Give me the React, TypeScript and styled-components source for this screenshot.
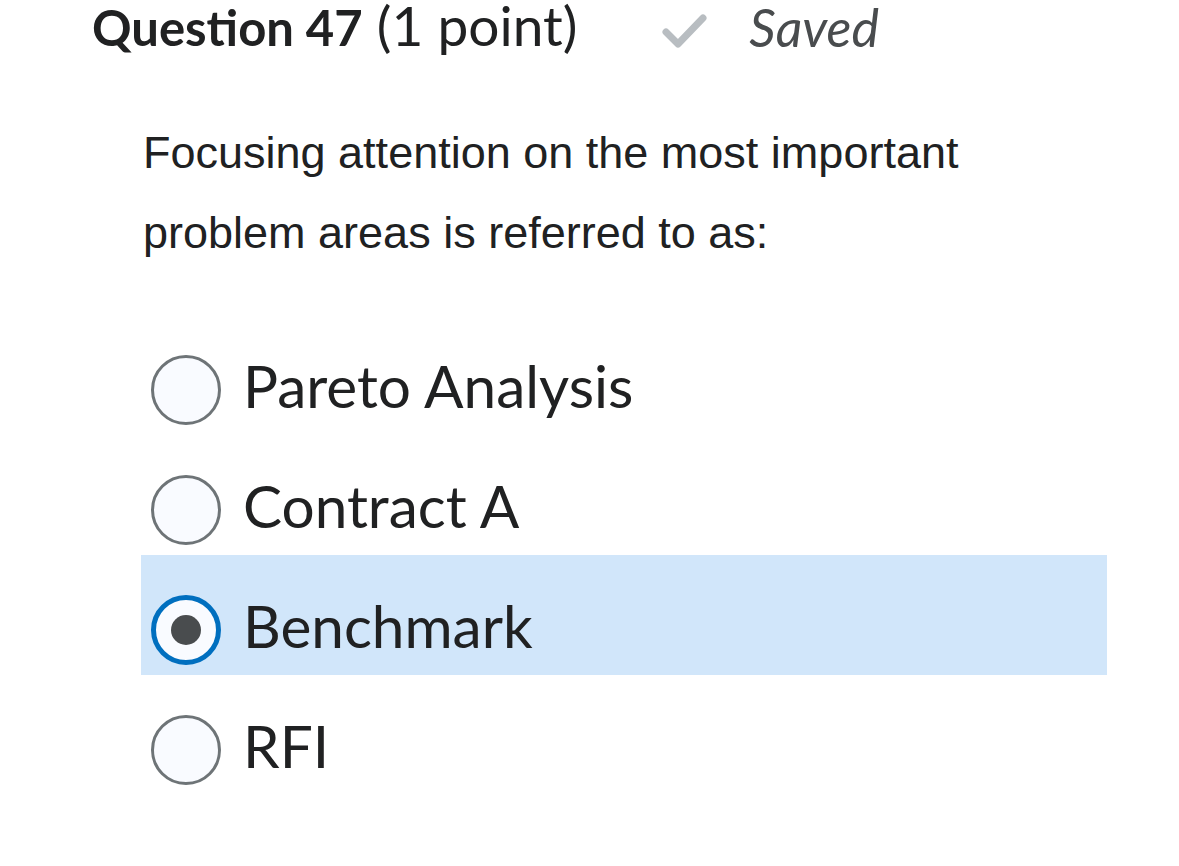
import React from "react";
import styled, { createGlobalStyle } from "styled-components";

const GlobalStyle = createGlobalStyle`
  html, body {
    margin: 0;
    padding: 0;
    background: #ffffff;
  }
`;

const Page = styled.div`
  width: 1179px;
  height: 866px;
  overflow: hidden;
  background: #fff;
  color: #202122;
  font-family: Lato, "Noto Sans", sans-serif;
`;

const Header = styled.div`
  display: flex;
  align-items: flex-start;
  padding: 0 0 0 92px;
  height: 58px;
`;

const Title = styled.h2`
  margin: 0;
  font-size: 55px;
  font-weight: 400;
  color: #202122;
  line-height: 46px;
  padding-top: 2px;
`;

const Strong = styled.span`
  font-size: 49px;
  font-weight: 700;
`;

const Status = styled.div`
  display: flex;
  align-items: flex-start;
  margin-left: 84px;
  gap: 42px;
  color: #494c4e;
  font-style: italic;
  font-size: 52px;
  line-height: 54px;
`;

const Check = styled.svg`
  margin-top: 14px;
  flex-shrink: 0;
`;

const Prompt = styled.p`
  margin: 55px 0 0 143px;
  width: 900px;
  font-family: "Liberation Sans", Arial, sans-serif;
  font-size: 45px;
  line-height: 80px;
  color: #202122;
`;

const Options = styled.div`
  margin-top: 42px;
  padding-left: 141px;
  width: 966px;
`;

const Option = styled.label<{ selected?: boolean }>`
  box-sizing: border-box;
  display: flex;
  align-items: center;
  height: 120px;
  padding: 30px 0 0 10px;
  background: ${(p) => (p.selected ? "#d1e6fa" : "transparent")};
`;

const Radio = styled.span<{ selected?: boolean }>`
  box-sizing: border-box;
  width: 70px;
  height: 70px;
  border-radius: 50%;
  background: #f9fbff;
  border: ${(p) => (p.selected ? "5px solid #006fbf" : "3px solid #6e7477")};
  display: flex;
  align-items: center;
  justify-content: center;
  flex-shrink: 0;
`;

const Dot = styled.span`
  width: 30px;
  height: 30px;
  border-radius: 50%;
  background: #494c4e;
`;

const OptionText = styled.span`
  margin: 0 0 10px 22px;
  font-size: 58.5px;
  color: #202122;
`;

const options = ["Pareto Analysis", "Contract A", "Benchmark", "RFI"];

const App: React.FC = () => {
  const selected = 2;
  return (
    <>
      <GlobalStyle />
      <Page>
        <Header>
          <Title>
            <Strong>Question 47</Strong> (1 point)
          </Title>
          <Status>
            <Check width="46" height="34" viewBox="0 0 46 34">
              <path
                d="M5 18 L17 30 L42 4"
                fill="none"
                stroke="#b8bdc1"
                strokeWidth="7"
                strokeLinecap="round"
                strokeLinejoin="round"
              />
            </Check>
            <span>Saved</span>
          </Status>
        </Header>
        <Prompt>
          Focusing attention on the most important problem areas is referred to
          as:
        </Prompt>
        <Options>
          {options.map((o, i) => (
            <Option key={o} selected={i === selected}>
              <Radio selected={i === selected}>{i === selected && <Dot />}</Radio>
              <OptionText>{o}</OptionText>
            </Option>
          ))}
        </Options>
      </Page>
    </>
  );
};

export default App;
